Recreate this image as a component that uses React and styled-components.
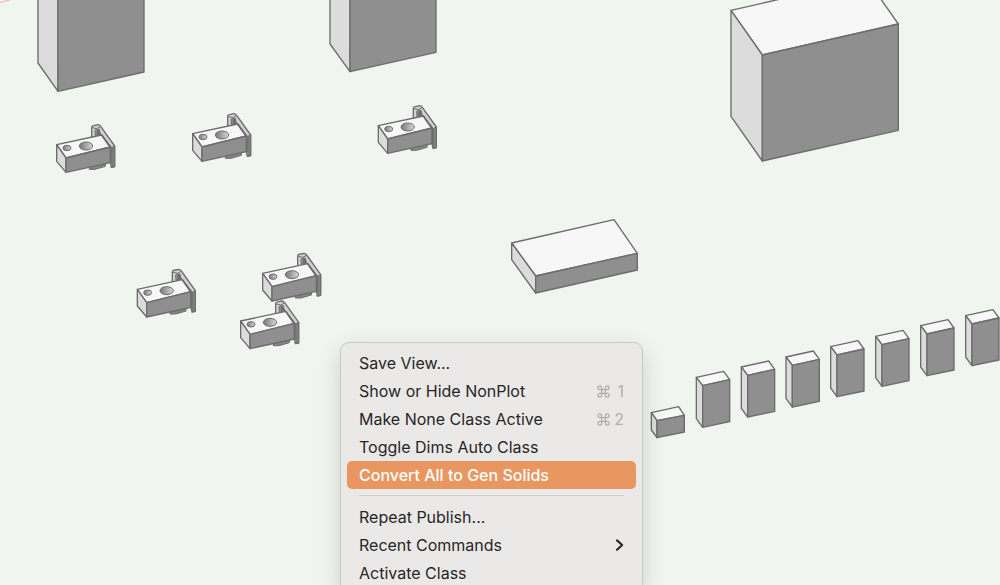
import React from "react";
import styled, { createGlobalStyle } from "styled-components";

const GlobalStyle = createGlobalStyle`
  body {
    margin: 0;
    background: #f0f5ef;
    font-family: Inter, "Liberation Sans", sans-serif;
  }
`;

const Workspace = styled.main`
  position: relative;
  min-height: 100vh;
  overflow: hidden;
`;

const Drawing = styled.svg`
  position: absolute;
  inset: 0;
  width: 100%;
  height: 100%;
`;

const ContextMenu = styled.div`
  position: absolute;
  top: 343px;
  left: 341px;
  width: 301px;
  box-sizing: border-box;
  padding: 6px;
  border-radius: 8px;
  background: #ebe9e8;
  box-shadow: 0 0 0 1px #c6c9c5, 0 8px 24px rgba(0, 0, 0, 0.16);
`;

const MenuItem = styled.button`
  display: flex;
  align-items: center;
  justify-content: space-between;
  width: 100%;
  height: 28px;
  padding: 0 12px;
  border: 0;
  border-radius: 5px;
  background: ${(p) => (p.$active ? "#e99661" : "transparent")};
  color: ${(p) => (p.$active ? "#ffffff" : "#262626")};
  font-family: inherit;
  font-size: 16px;
  font-weight: ${(p) => (p.$active ? 500 : 400)};
  line-height: 28px;
  text-align: left;
  white-space: nowrap;
`;

const Shortcut = styled.span`
  display: flex;
  align-items: center;
  gap: 4px;
  color: #b0aeae;
`;

const ShortcutKey = styled.span`
  width: 10px;
  text-align: right;
`;

const Separator = styled.hr`
  height: 1px;
  margin: 6px 12px 7px;
  border: 0;
  background: #cfcdcc;
`;

const CommandIcon = () => (
  <svg width="13" height="13" viewBox="0 0 14 14" fill="none" stroke="currentColor" strokeWidth="1.4" aria-label="Command">
    <path d="M5 5V3A2 2 0 1 0 3 5H11A2 2 0 1 0 9 3V11A2 2 0 1 0 11 9H3A2 2 0 1 0 5 11Z" />
  </svg>
);

const ChevronIcon = () => (
  <svg width="10" height="14" viewBox="0 0 10 14" fill="none" stroke="currentColor" strokeWidth="2.1" strokeLinecap="round" strokeLinejoin="round" aria-hidden="true">
    <path d="M3 2.4 8.2 7 3 11.8" />
  </svg>
);

const EDGE = "#6c6c6c";

// A cuboid in the axonometric view, from its seven visible corners.
const Cuboid = ({ at = [0, 0], left, front, right, back }) => {
  const [lx, lt, lb] = left;
  const [fx, ft, fb] = front;
  const [rx, rt, rb] = right;
  return (
    <g transform={`translate(${at[0]} ${at[1]})`} stroke={EDGE} strokeWidth="4" strokeLinejoin="round">
      <polygon fill="#f7f7f7" points={`${lx},${lt} ${back[0]},${back[1]} ${rx},${rt} ${fx},${ft}`} />
      <polygon fill="#dcdcdc" points={`${lx},${lt} ${fx},${ft} ${fx},${fb} ${lx},${lb}`} />
      <polygon fill="#8f8f8f" points={`${fx},${ft} ${rx},${rt} ${rx},${rb} ${fx},${fb}`} />
    </g>
  );
};

// A block with two bores, a foot and an end plate.
const Bracket = ({ at }) => (
  <g transform={`translate(${at[0]} ${at[1]})`} stroke={EDGE} strokeWidth="4" strokeLinejoin="round">
    <path fill="#858585" strokeWidth="3" d="M268 501V508H285L316 499V489Z" />
    <path fill="#d2d2d2" d="M275 412V382Q276 376 284 376L294 374Q299 375 302 379L344 438V500L334 502L331 488L305 415Z" />
    <path fill="#969696" strokeWidth="3" d="M285 391 298 388 301 404 286 407Z" />
    <path fill="#6f6f6f" strokeWidth="2" d="M291 394 298 392V402L291 404Z" />
    <path fill="none" strokeWidth="3" d="M277 383 290 386 300 381M290 386 336 444" />
    <path fill="#858585" strokeWidth="3" d="M336 442 344 438V500L336 502Z" />
    <path fill="#f7f7f7" d="M170 434 305 405 331 441 198 474Z" />
    <path fill="#dcdcdc" d="M170 434 198 474V517L170 484Z" />
    <path fill="#8f8f8f" d="M198 474 331 441V488L198 517Z" />
    <path fill="none" strokeWidth="5" d="M305 405 333 445V490" />
    <ellipse cx="201" cy="444" rx="12" ry="8" fill="url(#bore)" strokeWidth="3" />
    <ellipse cx="258" cy="438" rx="20" ry="12" fill="url(#bore)" strokeWidth="3" />
  </g>
);

const BRACKETS = [[0, 0], [408, -33], [965, -57], [242, 434], [552, 529], [618, 386]];
const COLUMNS = [[2089, 1132], [2224, 1101], [2358, 1071], [2492, 1040], [2627, 1009], [2762, 977], [2897, 947]];

const Model = () => (
  <Drawing viewBox="0 0 3000 1755" preserveAspectRatio="xMinYMin slice" role="img" aria-label="Model view">
    <defs>
      <linearGradient id="bore">
        <stop offset="0" stopColor="#777777" />
        <stop offset="0.45" stopColor="#a2a2a2" />
        <stop offset="1" stopColor="#d8d8d8" />
      </linearGradient>
    </defs>
    <path d="M0 7 30 0" stroke="#efb1a8" strokeWidth="3" />
    <Cuboid left={[114, -60, 189]} front={[174, -30, 274]} right={[432, -60, 216]} back={[372, -90]} />
    <Cuboid at={[876, -58]} left={[114, -60, 190]} front={[174, -30, 273]} right={[432, -60, 215]} back={[372, -90]} />
    <Cuboid at={[2160, 0]} left={[33, 31, 349]} front={[127, 165, 483]} right={[535, 72, 391]} back={[441, -62]} />
    <Cuboid at={[1500, 630]} left={[35, 99, 149]} front={[107, 198, 249]} right={[412, 130, 180]} back={[342, 29]} />
    <Cuboid at={[1920, 900]} left={[34, 338, 390]} front={[51, 362, 413]} right={[133, 346, 396]} back={[116, 320]} />
    {COLUMNS.map((at) => (
      <Cuboid key={at[0]} at={at} left={[0, 0, 124]} front={[19, 25, 150]} right={[100, 7, 133]} back={[82, -18]} />
    ))}
    {BRACKETS.map((at) => (
      <Bracket key={at[0]} at={at} />
    ))}
  </Drawing>
);

export default function App() {
  return (
    <Workspace>
      <GlobalStyle />
      <Model />
      <ContextMenu role="menu">
        <MenuItem role="menuitem">Save View...</MenuItem>
        <MenuItem role="menuitem">
          Show or Hide NonPlot
          <Shortcut><CommandIcon /><ShortcutKey>1</ShortcutKey></Shortcut>
        </MenuItem>
        <MenuItem role="menuitem">
          Make None Class Active
          <Shortcut><CommandIcon /><ShortcutKey>2</ShortcutKey></Shortcut>
        </MenuItem>
        <MenuItem role="menuitem">Toggle Dims Auto Class</MenuItem>
        <MenuItem role="menuitem" $active>Convert All to Gen Solids</MenuItem>
        <Separator />
        <MenuItem role="menuitem">Repeat Publish...</MenuItem>
        <MenuItem role="menuitem">
          Recent Commands
          <ChevronIcon />
        </MenuItem>
        <MenuItem role="menuitem">Activate Class</MenuItem>
      </ContextMenu>
    </Workspace>
  );
}
